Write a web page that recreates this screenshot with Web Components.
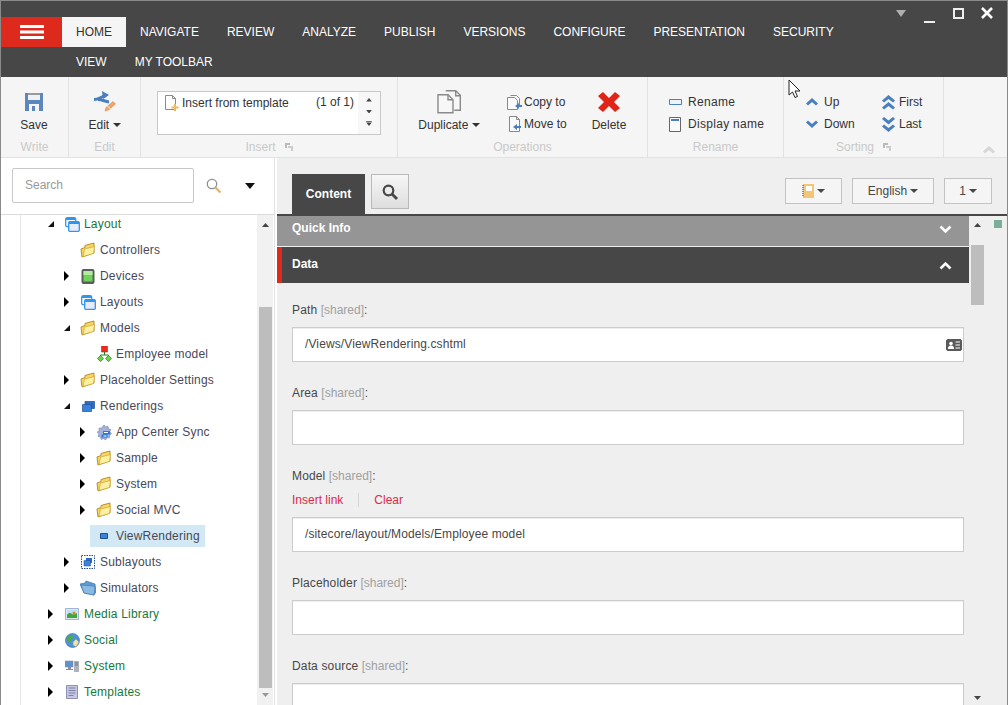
<!DOCTYPE html>
<html>
<head>
<meta charset="utf-8">
<title>Content Editor</title>
<style>
    html, body { margin: 0; padding: 0; height: 100%; overflow: hidden; background: #fff; }
    body { font: 12px "Liberation Sans", Arial, sans-serif; color: #474747; }
</style>
</head>
<body>

<sc-window>
    <sc-titlebar slot="top"></sc-titlebar>
    <sc-ribbon slot="top">
        <ribbon-group caption="Write" w="68">
            <rb-big icon="save" label="Save" style="width:66px"></rb-big>
        </ribbon-group>
        <ribbon-group caption="Edit" w="72">
            <rb-big icon="edit" label="Edit" drop style="width:71px"></rb-big>
        </ribbon-group>
        <ribbon-group caption="Insert" w="257" launcher>
            <insert-list style="margin:14px 0 0 16px"></insert-list>
        </ribbon-group>
        <ribbon-group caption="Operations" w="250">
            <rb-big icon="duplicate" label="Duplicate" drop style="margin-left:20px;width:62px"></rb-big>
            <rb-col style="margin-left:27px;width:84px">
                <rb-small icon="copyto" label="Copy to" style="--gap:2px"></rb-small>
                <rb-small icon="moveto" label="Move to" style="--gap:2px"></rb-small>
            </rb-col>
            <rb-big icon="delete" label="Delete" style="width:36px"></rb-big>
        </ribbon-group>
        <ribbon-group caption="Rename" w="136">
            <rb-col style="margin-left:21px">
                <rb-small icon="rename" label="Rename" style="--ls:.3px"></rb-small>
                <rb-small icon="displayname" label="Display name" style="--ls:.3px"></rb-small>
            </rb-col>
        </ribbon-group>
        <ribbon-group caption="Sorting" w="160" launcher>
            <rb-col style="margin-left:22px;width:76px">
                <rb-small icon="up" label="Up"></rb-small>
                <rb-small icon="down" label="Down"></rb-small>
            </rb-col>
            <rb-col>
                <rb-small icon="first" label="First" style="--gap:4px"></rb-small>
                <rb-small icon="last" label="Last" style="--gap:4px"></rb-small>
            </rb-col>
        </ribbon-group>
        <ribbon-collapse></ribbon-collapse>
    </sc-ribbon>

    <tree-panel slot="left">
        <tree-node level="1" state="open" icon="layout" root label="Layout"></tree-node>
        <tree-node level="2" icon="folder" label="Controllers"></tree-node>
        <tree-node level="2" state="closed" icon="device" label="Devices"></tree-node>
        <tree-node level="2" state="closed" icon="layout" label="Layouts"></tree-node>
        <tree-node level="2" state="open" icon="folder" label="Models"></tree-node>
        <tree-node level="3" icon="model" label="Employee model"></tree-node>
        <tree-node level="2" state="closed" icon="folder" label="Placeholder Settings"></tree-node>
        <tree-node level="2" state="open" icon="renderings" label="Renderings"></tree-node>
        <tree-node level="3" state="closed" icon="gear" label="App Center Sync"></tree-node>
        <tree-node level="3" state="closed" icon="folder" label="Sample"></tree-node>
        <tree-node level="3" state="closed" icon="folder" label="System"></tree-node>
        <tree-node level="3" state="closed" icon="folder" label="Social MVC"></tree-node>
        <tree-node level="3" icon="viewrendering" selected label="ViewRendering"></tree-node>
        <tree-node level="2" state="closed" icon="sublayouts" label="Sublayouts"></tree-node>
        <tree-node level="2" state="closed" icon="bluefolder" label="Simulators"></tree-node>
        <tree-node level="1" state="closed" icon="media" root label="Media Library"></tree-node>
        <tree-node level="1" state="closed" icon="globe" root label="Social"></tree-node>
        <tree-node level="1" state="closed" icon="computer" root label="System"></tree-node>
        <tree-node level="1" state="closed" icon="templates" root label="Templates"></tree-node>
    </tree-panel>

    <editor-panel slot="right">
        <section-head label="Quick Info"></section-head>
        <section-head label="Data" open></section-head>
        <form-area>
            <form-field name="Path" value="/Views/ViewRendering.cshtml" card></form-field>
            <form-field name="Area"></form-field>
            <form-field name="Model" value="/sitecore/layout/Models/Employee model" links></form-field>
            <form-field name="Placeholder"></form-field>
            <form-field name="Data source"></form-field>
        </form-area>
    </editor-panel>

    <mouse-cursor slot="over"></mouse-cursor>
</sc-window>

<script>
// all icons in one place, [width, height, markup]
const ICONS = {
    save: [20, 20, `<path d="M1 1h18v18H1z" fill="#5b87bd"/><path d="M4 1h12v2H4z" fill="#9a9a9a"/><path d="M4 3h12v5H4z" fill="#eef1f5"/><path d="M5 12h10v7H5z" fill="#f5f5f5"/><path d="M8 14h3v5H8z" fill="#5b87bd"/>`],
    edit: [24, 22, `<path d="M1 8.500C5 8.500 8 6 13 4.500M5 8.500c4 0 7 2 11 2.500" fill="none" stroke="#4a7fbe" stroke-width="3"/><path d="M9 0l7 4-6 4z" fill="#4a7fbe"/><path d="M12 20l1-3.500 7-6 2.500 2.500-7 6z" fill="#f0a468" stroke="#e08a48" stroke-width=".6"/><path d="M14.500 15l3 3" stroke="#fff" stroke-width=".8"/>`],
    duplicate: [24, 24, `<g fill="#f7f7f7" stroke="#8a8a8a" stroke-width="1.4"><path d="M8.700 .7h10l4.600 4.600v15h-6"/><path d="M1 4.700h10l5 5v13H1z"/><path d="M18.700 .7v5h4.600M11 4.700v5h5" fill="none"/></g>`],
    copyto: [15, 15, `<path d="M3.500 .5h6l3 3v8" fill="#fafafa" stroke="#888"/><path d="M.5 2.500h7l3 3v9H.5z" fill="#fafafa" stroke="#888"/><path d="M15 10v2h-3v2l-4-3 4-3v2z" fill="#4a7fbe"/>`],
    moveto: [15, 16, `<path d="M2.500 .5h7l3 3v12h-10z" fill="#fafafa" stroke="#888"/><path d="M9.500 .5v3h3" fill="none" stroke="#888"/><path d="M14 8v2H10V8l-4 3 4 3v-2h4z" fill="#4a7fbe"/>`],
    delete: [22, 20, `<path d="M5 0l6 6 6-6 5 4-6 6 6 6-5 4-6-6-6 6-5-4 6-6-6-6z" fill="#e02518"/>`],
    rename: [13, 7, `<path d="M.5 .5h12v5H.5z" fill="#eef3fa" stroke="#4a7fbe"/>`],
    displayname: [13, 15, `<path d="M.5 .5h11v14H.5z" fill="#fafafa" stroke="#666"/><path d="M2 2h8v2H2z" fill="#4a7fbe"/>`],
    up: [12, 8, `<path d="M6 0l6 5.500-2 2-4-3.600-4 3.600-2-2z" fill="#4a7fbe"/>`],
    down: [12, 8, `<path d="M6 8L0 2.500l2-2 4 3.600 4-3.600 2 2z" fill="#4a7fbe"/>`],
    first: [13, 15, `<path d="M6.500 0l6.500 5.500-2 2-4.500-3.600L2 7.500l-2-2zM6.500 7l6.500 5.500-2 2-4.500-3.600L2 14.500l-2-2z" fill="#4a7fbe"/>`],
    last: [13, 15, `<path d="M6.500 7.500L0 2l2-2 4.500 3.600L11 0l2 2zM6.500 15L0 9.500l2-2 4.500 3.600L11 7.500l2 2z" fill="#4a7fbe"/>`],
    template: [15, 16, `<path d="M1.500 .5h7l3 3v11h-10z" fill="#fff" stroke="#8a8a8a"/><path d="M8.500 .5v3h3" fill="none" stroke="#8a8a8a"/><path d="M10 9h2v2.500h2.500v2H12V16h-2v-2.500H7.500v-2H10z" fill="#eeb95c"/>`],
    launcher: [8, 8, `<path d="M0 0h5v2H2v3H0z" fill="#bbb"/><path d="M3 3h5v5H6V5H3z" fill="#ccc"/>`],
    folder: [16, 16, `<path d="M1 7l4-1.500V3.500L14 1v10L2 15z" fill="#f7d768" stroke="#b98f24"/><path d="M4.500 7L14.500 4.500l-1 7L3 14.500z" fill="#fff0a0" stroke="#c9a238" stroke-width=".7"/>`],
    bluefolder: [16, 16, `<path d="M0 4l5-1 1-2 6 2 3 1 1 8-2 3-10-2z" fill="#5d9ad2" stroke="#3d74aa" stroke-width=".7"/><path d="M1 5l12 1 2 1-1 8-10-2z" fill="#8ab9e4" stroke="#3d74aa" stroke-width=".6"/>`],
    device: [14, 15, `<rect x=".5" width="13" height="15" rx="2" fill="#5a5e5b"/><rect x="2.500" y="2" width="9" height="10.500" fill="#6fd25a"/><path d="M2.500 2h9v4h-9z" fill="#b2ec9c"/>`],
    layout: [15, 15, `<rect x=".7" y=".7" width="10" height="9" rx="1.500" fill="#fff" stroke="#2d97f0" stroke-width="1.300"/><path d="M1 1h9.500v2H1z" fill="#2d97f0"/><rect x="3.700" y="4.700" width="10.600" height="9.600" rx="1" fill="#e8ecfa" stroke="#2d97f0" stroke-width="1.300"/><path d="M4 5h10v2H4z" fill="#2d97f0"/>`],
    model: [15, 16, `<path d="M4.500 0h6v6h-6z" fill="#ee2a1e" stroke="#b22" stroke-width=".6"/><path d="M7.500 6v3M3.500 11V9h8v2" fill="none" stroke="#2a7a20"/><path d="M3.500 9.500l3 3-3 3-3-3zM11.500 9.500l3 3-3 3-3-3z" fill="#6cd34e" stroke="#2a7a20" stroke-width=".7"/>`],
    renderings: [13, 11, `<path d="M3 .5h9.500v7H3z" fill="#2b6cc4" stroke="#1f4e96" stroke-width=".7"/><path d="M.5 3.500h9v7h-9z" fill="#3a82dc" stroke="#1f4e96" stroke-width=".7"/>`],
    gear: [15, 15, `<path d="M7 0l1.500 2 2.500-.7.300 2.500 2.500.7-1 2.300 1.700 1.900-2 1.500.2 2.500-2.500.1L8.500 15l-2-1.500-2.300 1-.6-2.500L1 11.300l1-2.300L.2 7l2-1.300L2 3.200l2.500-.1z" fill="#a7b2d8" stroke="#6f7cab" stroke-width=".6"/><path d="M6 6h7v3.500H6zM4.500 9.500h6v3h-6z" fill="#2b7cd6"/><path d="M7 7.500h4M6.500 11h3" stroke="#fff" stroke-width="1"/>`],
    viewrendering: [8, 6, `<path d="M.5 .5h7v5h-7z" fill="#3a82dc" stroke="#1f4e96"/>`],
    sublayouts: [14, 14, `<path d="M.5 .5h13v13H.5z" fill="#fff" stroke="#1f4e96" stroke-dasharray="1.500 1"/><path d="M5 3h6v5H5z" fill="#2b6cc4"/><path d="M3 5.500h6.500V11H3z" fill="#3a82dc" stroke="#1f4e96" stroke-width=".5"/>`],
    media: [14, 12, `<path d="M.5 .5h13v11H.5z" fill="#dfe6f2" stroke="#a0b4d4"/><path d="M2 2h10v5H2z" fill="#bfe0f5"/><path d="M2 7c2-3 4-2 5-1s3 0 5-1v5H2z" fill="#3ea83a"/><circle cx="9" cy="5" r="1.500" fill="#f07a28"/>`],
    globe: [15, 15, `<circle cx="7.500" cy="7.500" r="7" fill="#4f93d6" stroke="#2d6aa5" stroke-width=".6"/><path d="M2 5c2-3 5-3 6-2s-1 3-2 4-2 4-3 2-2-3-1-4z" fill="#4fae3f"/><path d="M8 9l3-3 3 3-3 5-3-2z" fill="#eee3a6" stroke="#888" stroke-width=".5"/>`],
    computer: [14, 12, `<path d="M0 1h8v6H0z" fill="#5e93d2" stroke="#8b8f99" stroke-width=".6"/><path d="M9 1h5v11H9z" fill="#aeb2ba"/><path d="M3 7h3v2h2v1H1V9h2z" fill="#8b8f99"/><path d="M10 3h3M10 5h3" stroke="#6c7079"/>`],
    templates: [12, 14, `<path d="M.5 .5h11v13H.5z" fill="#c6c8e2" stroke="#8e90b8"/><path d="M2.500 3h7M2.500 5.500h7M2.500 8h7M2.500 10.500h5" stroke="#7c7ea6"/>`],
    magnifier: [16, 16, `<circle cx="6" cy="6" r="4.700" fill="#fff" stroke="#8e8e8e" stroke-width="1.300"/><path d="M9.500 9.500l5 5" stroke="#e9b35f" stroke-width="2.400"/>`],
    lens: [16, 16, `<circle cx="6.500" cy="6.500" r="4.800" fill="none" stroke="#474747" stroke-width="2.200"/><path d="M10 10l5 5" stroke="#474747" stroke-width="2.800"/>`],
    notebook: [12, 14, `<path d="M1 0h11v14H1z" fill="#f1c777"/><path d="M4 2h6v5H4z" fill="#fff"/><path d="M0 1.500h2M0 3.500h2M0 5.500h2M0 7.500h2M0 9.500h2M0 11.500h2" stroke="#777" stroke-width=".8"/>`],
    card: [16, 12, `<rect x=".5" y=".5" width="15" height="11" rx="1.500" fill="#5a5a5a" stroke="#5a5a5a"/><circle cx="5" cy="4.500" r="1.800" fill="#fff"/><path d="M2 10c0-3 1.500-3.500 3-3.500S8 7 8 10z" fill="#fff"/><path d="M9.500 3H14M9.500 6H14M9.500 9H14" stroke="#fff" stroke-width="1.200"/>`]
};

function svgIcon(name) {
    const [w, h, body] = ICONS[name];
    return `<svg width="${w}" height="${h}" viewBox="0 0 ${w} ${h}" style="display:block;flex:none">${body}</svg>`;
}

const caret = (color = "#474747") => `<svg width="8" height="4" viewBox="0 0 8 4" style="display:inline-block;vertical-align:2px"><path d="M0 0h8L4 4z" fill="${color}"/></svg>`;

class ScWindow extends HTMLElement {
    constructor() {
        super();
        this.attachShadow({ mode: "open" });
        this.shadowRoot.innerHTML = `
            <style>
                :host {
                    display: flex;
                    flex-direction: column;
                    position: relative;
                    box-sizing: border-box;
                    width: 1008px;
                    height: 705px;
                    border: 1px solid #8a8a8a;
                    border-bottom: 0;
                    overflow: hidden;
                }
                .main { flex: 1; display: flex; min-height: 0; }
            </style>
            <slot name="top"></slot>
            <div class="main">
                <slot name="left"></slot>
                <slot name="right"></slot>
            </div>
            <slot name="over"></slot>
        `;
    }
}

class ScTitlebar extends HTMLElement {
    constructor() {
        super();
        this.attachShadow({ mode: "open" });
        const tabs = ["HOME", "NAVIGATE", "REVIEW", "ANALYZE", "PUBLISH", "VERSIONS", "CONFIGURE", "PRESENTATION", "SECURITY", "VIEW", "MY TOOLBAR"];
        this.shadowRoot.innerHTML = `
            <style>
                :host {
                    display: flex;
                    height: 76px;
                    box-sizing: border-box;
                    padding-top: 16px;
                    background: #474747;
                    color: #fff;
                }
                .menu {
                    flex: none;
                    width: 61px;
                    height: 30px;
                    background: #de291d;
                    display: flex;
                    align-items: center;
                    justify-content: center;
                }
                .tabs { width: 786px; display: flex; flex-wrap: wrap; align-content: flex-start; }
                .tab { height: 30px; line-height: 30px; padding: 0 14px; white-space: nowrap; }
                .tab.on { background: #f5f5f5; color: #333; }
                .ctl { flex: none; display: flex; margin: -16px 0 0 0; height: 20px; }
            </style>
            <div class="menu">
                <svg width="24" height="14" viewBox="0 0 24 14"><path d="M0 0h24v3H0zM0 5.500h24v3H0zM0 11h24v3H0z" fill="#fff"/></svg>
            </div>
            <div class="tabs">
                ${tabs.map((t, i) => `<div class="tab${i === 0 ? " on" : ""}">${t}</div>`).join("")}
            </div>
            <div class="ctl">
                <svg width="10" height="7" viewBox="0 0 10 7" style="margin:9px 0 0 48px"><path d="M0 0h10L5 7z" fill="#b0b0b0"/></svg>
                <svg width="11" height="2" viewBox="0 0 11 2" style="margin:20px 0 0 18px"><path d="M0 0h11v2H0z" fill="#eee"/></svg>
                <svg width="11" height="11" viewBox="0 0 11 11" style="margin:7px 0 0 18px"><path d="M1 1h9v9H1z" fill="none" stroke="#eee" stroke-width="2"/></svg>
                <svg width="12" height="12" viewBox="0 0 12 12" style="margin:6px 0 0 17px"><path d="M1 1l10 10M11 1L1 11" stroke="#fff" stroke-width="2.600"/></svg>
            </div>
        `;
    }
}

class ScRibbon extends HTMLElement {
    constructor() {
        super();
        this.attachShadow({ mode: "open" });
        this.shadowRoot.innerHTML = `
            <style>
                :host {
                    display: flex;
                    flex: none;
                    height: 81px;
                    box-sizing: border-box;
                    background: #f5f5f5;
                    border-bottom: 1px solid #e2e2e2;
                }
            </style>
            <slot></slot>
        `;
    }
}

class RibbonGroup extends HTMLElement {
    constructor() {
        super();
        this.attachShadow({ mode: "open" });
        this.shadowRoot.innerHTML = `
            <style>
                :host {
                    display: flex;
                    flex-direction: column;
                    flex: none;
                    box-sizing: border-box;
                    border-right: 1px solid #e2e2e2;
                }
                .body { height: 58px; display: flex; }
                .cap {
                    height: 22px;
                    box-sizing: border-box;
                    padding-top: 2px;
                    display: flex;
                    align-items: center;
                    justify-content: center;
                    gap: 9px;
                    color: #c9c9c9;
                }
            </style>
            <div class="body"><slot></slot></div>
            <div class="cap"></div>
        `;
    }
    connectedCallback() {
        this.style.width = this.getAttribute("w") + "px";
        const cap = this.shadowRoot.querySelector(".cap");
        cap.innerHTML = `<span>${this.getAttribute("caption")}</span>` + (this.hasAttribute("launcher") ? svgIcon("launcher") : "");
    }
}

class RbBig extends HTMLElement {
    constructor() {
        super();
        this.attachShadow({ mode: "open" });
    }
    connectedCallback() {
        const drop = this.hasAttribute("drop") ? " " + caret("#333") : "";
        this.shadowRoot.innerHTML = `
            <style>
                :host {
                    display: flex;
                    flex: none;
                    flex-direction: column;
                    align-items: center;
                    box-sizing: border-box;
                    padding-top: 15px;
                    color: #333;
                }
                .ic { height: 20px; display: flex; align-items: center; }
                .lb { margin-top: 6px; line-height: 14px; white-space: nowrap; }
            </style>
            <div class="ic">${svgIcon(this.getAttribute("icon"))}</div>
            <div class="lb">${this.getAttribute("label")}${drop}</div>
        `;
    }
}

class RbCol extends HTMLElement {
    constructor() {
        super();
        this.attachShadow({ mode: "open" });
        this.shadowRoot.innerHTML = `
            <style>
                :host { display: flex; flex: none; flex-direction: column; padding-top: 14px; }
            </style>
            <slot></slot>
        `;
    }
}

class RbSmall extends HTMLElement {
    constructor() {
        super();
        this.attachShadow({ mode: "open" });
    }
    connectedCallback() {
        this.shadowRoot.innerHTML = `
            <style>
                :host {
                    display: flex;
                    align-items: center;
                    gap: var(--gap, 6px);
                    height: 23px;
                    color: #333;
                    white-space: nowrap;
                    letter-spacing: var(--ls, 0);
                }
            </style>
            ${svgIcon(this.getAttribute("icon"))}
            <span>${this.getAttribute("label")}</span>
        `;
    }
}

class InsertList extends HTMLElement {
    constructor() {
        super();
        this.attachShadow({ mode: "open" });
        this.shadowRoot.innerHTML = `
            <style>
                :host {
                    display: flex;
                    box-sizing: border-box;
                    width: 224px;
                    height: 44px;
                    background: #fff;
                    border: 1px solid #c8c8c8;
                    color: #333;
                }
                .item { flex: 1; display: flex; align-items: flex-start; padding: 3px 4px 0 6px; }
                .t { margin: 1px 0 0 3px; flex: 1; white-space: nowrap; }
                .n { margin-top: 0; color: #333; }
                .sc {
                    width: 22px;
                    background: #f7f7f7;
                    display: flex;
                    flex-direction: column;
                    align-items: center;
                    padding-top: 6px;
                    box-sizing: border-box;
                }
                svg.a { display: block; margin-bottom: 8px; }
            </style>
            <div class="item">
                ${svgIcon("template")}
                <span class="t">Insert from template</span>
                <span class="n">(1 of 1)</span>
            </div>
            <div class="sc">
                <svg class="a" width="8" height="5" viewBox="0 0 8 5"><path d="M4 0l4 5H0z" fill="#444"/></svg>
                <svg class="a" width="8" height="5" viewBox="0 0 8 5"><path d="M0 0h8L4 5z" fill="#444"/></svg>
                <svg class="a" width="8" height="7" viewBox="0 0 8 7"><path d="M0 0h8v1H0zM0 2h8L4 7z" fill="#444"/></svg>
            </div>
        `;
    }
}

class RibbonCollapse extends HTMLElement {
    constructor() {
        super();
        this.attachShadow({ mode: "open" });
        this.shadowRoot.innerHTML = `
            <style>
                :host { flex: 1; display: flex; justify-content: flex-end; align-items: flex-end; padding: 0 12px 3px 0; }
            </style>
            <svg width="12" height="8" viewBox="0 0 12 8"><path d="M6 0l6 5.500-2 2-4-3.500-4 3.500-2-2z" fill="#d5d5d5"/></svg>
        `;
    }
}

class TreePanel extends HTMLElement {
    constructor() {
        super();
        this.attachShadow({ mode: "open" });
        this.shadowRoot.innerHTML = `
            <style>
                :host {
                    display: flex;
                    flex-direction: column;
                    flex: none;
                    position: relative;
                    box-sizing: border-box;
                    width: 274px;
                    height: 100%;
                    background: #fff;
                    border-right: 1px solid #e2e2e2;
                }
                .search {
                    flex: none;
                    box-sizing: border-box;
                    height: 57px;
                    padding: 10px 0 0 11px;
                    display: flex;
                    align-items: flex-start;
                    border-bottom: 1px solid #dcdcdc;
                }
                .box {
                    box-sizing: border-box;
                    width: 182px;
                    height: 35px;
                    line-height: 33px;
                    padding-left: 12px;
                    border: 1px solid #c8c8c8;
                    border-radius: 2px;
                    color: #999;
                }
                .mag { margin: 10px 0 0 12px; }
                .drop { margin: 15px 0 0 23px; }
                .wrap { flex: 1; display: flex; min-height: 0; overflow: hidden; }
                .rule { flex: none; width: 1px; margin-left: 19px; background: #e8e8e8; }
                .nodes { flex: 1; min-width: 0; margin-top: -4px; }
                .bar {
                    flex: none;
                    width: 16px;
                    margin-right: 1px;
                    box-sizing: border-box;
                    padding-left: 2px;
                    background: #f1f1f1;
                    display: flex;
                    flex-direction: column;
                }
                .arr { flex: none; display: block; margin-left: 3px; }
                .thumb { flex: none; width: 13px; height: 381px; margin-top: 80px; background: #bdbdbd; }
            </style>
            <div class="search">
                <div class="box">Search</div>
                <div class="mag">${svgIcon("magnifier")}</div>
                <svg class="drop" width="10" height="6" viewBox="0 0 10 6"><path d="M0 0h10L5 6z" fill="#111"/></svg>
            </div>
            <div class="wrap">
                <div class="rule"></div>
                <div class="nodes"><slot></slot></div>
                <div class="bar">
                    <svg class="arr" width="7" height="4" viewBox="0 0 7 4" style="margin-top:8px"><path d="M3.500 0L7 4H0z" fill="#444"/></svg>
                    <div class="thumb"></div>
                    <svg class="arr" width="7" height="4" viewBox="0 0 7 4" style="margin-top:5px"><path d="M0 0h7L3.500 4z" fill="#999"/></svg>
                </div>
            </div>
        `;
    }
}

class TreeNode extends HTMLElement {
    constructor() {
        super();
        this.attachShadow({ mode: "open" });
    }
    connectedCallback() {
        const level = +this.getAttribute("level");
        const state = this.getAttribute("state");
        let arrow = "";
        if (state === "open") {
            arrow = `<svg width="6" height="6" viewBox="0 0 6 6"><path d="M6 0v6H0z" fill="#111"/></svg>`;
        } else if (state === "closed") {
            arrow = `<svg width="5" height="10" viewBox="0 0 5 10"><path d="M0 0l5 5-5 5z" fill="#000"/></svg>`;
        }
        const sel = this.hasAttribute("selected");
        this.shadowRoot.innerHTML = `
            <style>
                :host {
                    display: flex;
                    align-items: center;
                    height: 26px;
                    box-sizing: border-box;
                    padding-left: ${26 + 16 * (level - 1)}px;
                    color: ${this.hasAttribute("root") ? "#16793a" : "#484858"};
                    letter-spacing: .2px;
                    white-space: nowrap;
                }
                .arrow { width: 11px; flex: none; display: flex; align-items: center; padding-left: 1px; box-sizing: border-box; }
                .item {
                    display: flex;
                    align-items: center;
                    height: 22px;
                    padding: 0 5px 0 6px;
                    background: ${sel ? "#d2e9f5" : "transparent"};
                }
                .ic { width: 16px; margin-right: 4px; display: flex; justify-content: center; }
            </style>
            <span class="arrow">${arrow}</span>
            <span class="item">
                <span class="ic">${svgIcon(this.getAttribute("icon"))}</span>
                <span>${this.getAttribute("label")}</span>
            </span>
        `;
    }
}

class EditorPanel extends HTMLElement {
    constructor() {
        super();
        this.attachShadow({ mode: "open" });
        this.shadowRoot.innerHTML = `
            <style>
                :host {
                    display: flex;
                    flex-direction: column;
                    flex: 1;
                    min-width: 0;
                    margin-left: 2px;
                    height: 100%;
                    background: #efefef;
                }
                .top {
                    flex: none;
                    box-sizing: border-box;
                    height: 58px;
                    padding: 16px 15px 0 15px;
                    display: flex;
                    align-items: flex-start;
                    border-bottom: 2px solid #474747;
                }
                .tab {
                    width: 73px;
                    height: 40px;
                    line-height: 40px;
                    text-align: center;
                    color: #fff;
                    font-weight: bold;
                    background: #474747;
                }
                .find {
                    box-sizing: border-box;
                    width: 38px;
                    height: 35px;
                    margin-left: 6px;
                    border: 1px solid #b9b9b9;
                    background: linear-gradient(#f6f6f6, #dedede);
                    display: flex;
                    align-items: center;
                    justify-content: center;
                }
                .btns { margin-left: auto; display: flex; gap: 10px; padding-top: 4px; }
                .btn {
                    box-sizing: border-box;
                    height: 26px;
                    border: 1px solid #c2c2c2;
                    background: #f5f5f5;
                    display: flex;
                    align-items: center;
                    justify-content: center;
                    gap: 3px;
                }
                .body { flex: 1; display: flex; min-height: 0; }
                .col { width: 692px; flex: none; min-height: 0; overflow: hidden; }
                .bar { width: 15px; flex: none; display: flex; flex-direction: column; padding-left: 2px; }
                .arr { flex: none; display: block; margin-left: 3px; }
                .thumb { flex: none; width: 13px; height: 60px; margin-top: 18px; background: #bdbdbd; }
                .mark { width: 8px; height: 8px; margin: 4px 0 0 8px; background: #7aaf9a; }
            </style>
            <div class="top">
                <div class="tab">Content</div>
                <div class="find">${svgIcon("lens")}</div>
                <div class="btns">
                    <div class="btn" style="width:57px">${svgIcon("notebook")}${caret()}</div>
                    <div class="btn" style="width:82px">English${caret()}</div>
                    <div class="btn" style="width:48px">1${caret()}</div>
                </div>
            </div>
            <div class="body">
                <div class="col"><slot></slot></div>
                <div class="bar">
                    <svg class="arr" width="7" height="4" viewBox="0 0 7 4" style="margin-top:7px"><path d="M3.500 0L7 4H0z" fill="#444"/></svg>
                    <div class="thumb"></div>
                    <svg class="arr" width="7" height="4" viewBox="0 0 7 4" style="margin-top:391px"><path d="M0 0h7L3.500 4z" fill="#444"/></svg>
                </div>
                <div class="mark"></div>
            </div>
        `;
    }
}

class SectionHead extends HTMLElement {
    constructor() {
        super();
        this.attachShadow({ mode: "open" });
    }
    connectedCallback() {
        const open = this.hasAttribute("open");
        this.shadowRoot.innerHTML = `
            <style>
                :host {
                    display: flex;
                    align-items: center;
                    justify-content: space-between;
                    box-sizing: border-box;
                    height: ${open ? 36 : 30}px;
                    margin-bottom: ${open ? 0 : 1}px;
                    padding: 0 17px 0 ${open ? 10 : 15}px;
                    background: ${open ? "#474747" : "#959595"};
                    border-left: ${open ? "5px solid #de291d" : "0"};
                    color: #fff;
                    font-weight: bold;
                }
                span { margin-bottom: ${open ? 3 : 7}px; }
                svg { margin-bottom: ${open ? 0 : 4}px; }
            </style>
            <span>${this.getAttribute("label")}</span>
            <svg width="13" height="9" viewBox="0 0 13 9"><path d="${open ? "M1.500 7.500l5-5 5 5" : "M1.500 1.500l5 5 5-5"}" fill="none" stroke="#fff" stroke-width="2.600"/></svg>
        `;
    }
}

class FormArea extends HTMLElement {
    constructor() {
        super();
        this.attachShadow({ mode: "open" });
        this.shadowRoot.innerHTML = `
            <style>
                :host { display: block; padding: 16px 5px 0 15px; }
            </style>
            <slot></slot>
        `;
    }
}

class FormField extends HTMLElement {
    constructor() {
        super();
        this.attachShadow({ mode: "open" });
    }
    connectedCallback() {
        const value = this.getAttribute("value") || "";
        const links = this.hasAttribute("links") ? `
            <div class="links"><span>Insert link</span><i></i><span>Clear</span></div>` : "";
        const card = this.hasAttribute("card") ? `<span class="card">${svgIcon("card")}</span>` : "";
        this.shadowRoot.innerHTML = `
            <style>
                :host { display: block; margin-bottom: 20px; color: #474747; }
                .lab { height: 20px; line-height: 22px; }
                .lab b { font-weight: normal; letter-spacing: .15px; }
                .lab em { font-style: normal; color: #a0a0a0; }
                .links { height: 20px; margin-top: 4px; padding-top: 2px; box-sizing: border-box; display: flex; align-items: center; color: #dc2a4d; }
                .links i { width: 1px; height: 14px; margin: 0 15px 0 15px; background: #d5d5d5; }
                .inp {
                    box-sizing: border-box;
                    height: 35px;
                    margin-top: 8px;
                    padding: 0 0 2px 12px;
                    display: flex;
                    align-items: center;
                    justify-content: space-between;
                    background: #fff;
                    border: 1px solid #ccc;
                    box-shadow: inset 0 1px 0 #eee;
                    letter-spacing: .12px;
                }
                .card { margin: 2px 1px 0 0; }
            </style>
            <div class="lab"><b>${this.getAttribute("name")}</b> <em>[shared]</em>:</div>
            ${links}
            <div class="inp"><span>${value}</span>${card}</div>
        `;
    }
}

class MouseCursor extends HTMLElement {
    constructor() {
        super();
        this.attachShadow({ mode: "open" });
        this.shadowRoot.innerHTML = `
            <style>
                :host { position: absolute; left: 787px; top: 78px; width: 14px; height: 20px; }
            </style>
            <svg width="14" height="20" viewBox="0 0 14 20"><path d="M1 1v15l3.500-3 2.500 5.500 2.500-1L7 12h5z" fill="#fff" stroke="#222" stroke-width="1"/></svg>
        `;
    }
}

customElements.define("sc-window", ScWindow);
customElements.define("sc-titlebar", ScTitlebar);
customElements.define("sc-ribbon", ScRibbon);
customElements.define("ribbon-group", RibbonGroup);
customElements.define("rb-big", RbBig);
customElements.define("rb-col", RbCol);
customElements.define("rb-small", RbSmall);
customElements.define("insert-list", InsertList);
customElements.define("ribbon-collapse", RibbonCollapse);
customElements.define("tree-panel", TreePanel);
customElements.define("tree-node", TreeNode);
customElements.define("editor-panel", EditorPanel);
customElements.define("section-head", SectionHead);
customElements.define("form-area", FormArea);
customElements.define("form-field", FormField);
customElements.define("mouse-cursor", MouseCursor);
</script>
</body>
</html>
